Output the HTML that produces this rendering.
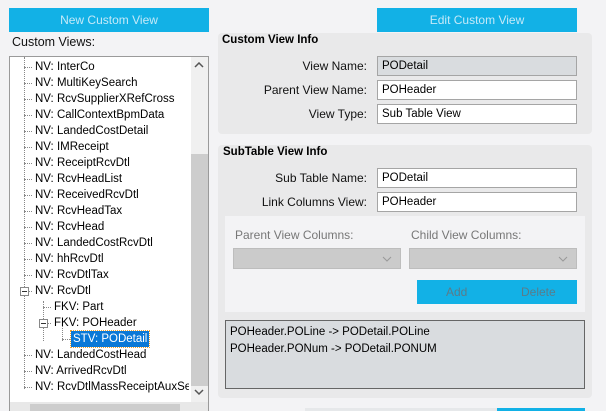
<!DOCTYPE html>
<html><head><style>
*{margin:0;padding:0;box-sizing:border-box}
body{width:606px;height:411px;overflow:hidden;background:#f3f3f5;font-family:"Liberation Sans",sans-serif;font-size:12px;color:#000;position:relative}
.a{position:absolute}
.btn{background:#12b1e6;color:#c4e9f8;text-align:center;line-height:24px;font-size:12px}
.grp{background:#e9e9ea;border-radius:4px}
.t{font-weight:bold;font-size:11.5px}
.lbl{text-align:right;width:150px;left:217px;font-size:12px;color:#111}
.in{left:377px;width:200px;height:20px;border:1px solid #a5a5a5;background:#fff;padding-left:4px;line-height:18px;font-size:11.5px}
.row{position:absolute;height:16px;line-height:16px;white-space:nowrap;font-size:11.5px;letter-spacing:0}
.h{position:absolute;border-top:1px dotted #888;width:8px}
</style></head><body>
<div class="a btn" style="left:9px;top:8px;width:200px;height:24px">New Custom View</div>
<div class="a" style="left:12px;top:35px;font-size:12.5px;color:#111">Custom Views:</div>
<div class="a" style="left:9px;top:56px;width:200px;height:355px;border:1px solid #9a9a9a;border-bottom:none;background:#fff;overflow:hidden">
 <div class="a" style="left:181px;top:0;width:17px;height:345px;background:#f0f0f0"></div>
 <div class="a" style="left:181px;top:97px;width:17px;height:232px;background:#cdcdcd"></div>
 <svg class="a" style="left:184px;top:5px" width="10" height="7"><path d="M1 5 L5 1 L9 5" fill="none" stroke="#555" stroke-width="1.5"/></svg>
 <svg class="a" style="left:184px;top:332px" width="10" height="7"><path d="M1 1 L5 5 L9 1" fill="none" stroke="#555" stroke-width="1.5"/></svg>
 <div class="a" style="left:0;top:345px;width:199px;height:12px;background:#e8e8e8"></div>
 <div class="a" style="left:20px;top:347px;width:150px;height:10px;background:#cdcdcd"></div>
 <div class="a" style="left:14px;top:0;height:332px;border-left:1px dotted #888"></div>
 <div class="a" style="left:33px;top:244px;height:40px;border-left:1px dotted #888"></div>
 <div class="a" style="left:52px;top:268px;height:16px;border-left:1px dotted #888"></div>
</div>
<div id="tree"></div>
<script>
var items=[["NV: InterCo",0],["NV: MultiKeySearch",0],["NV: RcvSupplierXRefCross",0],["NV: CallContextBpmData",0],["NV: LandedCostDetail",0],["NV: IMReceipt",0],["NV: ReceiptRcvDtl",0],["NV: RcvHeadList",0],["NV: ReceivedRcvDtl",0],["NV: RcvHeadTax",0],["NV: RcvHead",0],["NV: LandedCostRcvDtl",0],["NV: hhRcvDtl",0],["NV: RcvDtlTax",0],["NV: RcvDtl",0,1],["FKV: Part",1],["FKV: POHeader",1,1],["STV: PODetail",2],["NV: LandedCostHead",0],["NV: ArrivedRcvDtl",0],["NV: RcvDtlMassReceiptAuxSele",0]];
var h="";
items.forEach(function(it,i){var y=59+i*16,x=35+it[1]*19;
var lx=24+it[1]*19;
h+='<div class="h" style="left:'+lx+'px;top:'+(y+8)+'px"></div>';
if(it[2])h+='<div class="a" style="left:'+(lx-4)+'px;top:'+(y+4)+'px;width:9px;height:9px;border:1px solid #888;background:#fff"><div class="a" style="left:1px;top:3px;width:5px;border-top:1px solid #333"></div></div>';
if(it[1]==2)h+='<div class="row" style="left:'+(x-2)+'px;top:'+y+'px;background:#0a78d7;color:#fff;padding:0 2px;outline:1px dotted #f0a030;max-width:200px">'+it[0]+'</div>';
else h+='<div class="row" style="left:'+x+'px;top:'+y+'px;width:'+(189-x)+'px;overflow:hidden">'+it[0]+'</div>';});
document.getElementById("tree").innerHTML=h;
</script>
<div class="a btn" style="left:377px;top:8px;width:200px;height:24px">Edit Custom View</div>
<div class="a grp" style="left:218px;top:33px;width:374px;height:101px"></div>
<div class="a t" style="left:222px;top:34px">Custom View Info</div>
<div class="a lbl" style="top:59px">View Name:</div>
<div class="a lbl" style="top:83px">Parent View Name:</div>
<div class="a lbl" style="top:107px">View Type:</div>
<div class="a in" style="top:56px;background:#d9dcdf">PODetail</div>
<div class="a in" style="top:80px">POHeader</div>
<div class="a in" style="top:104px">Sub Table View</div>
<div class="a grp" style="left:218px;top:145px;width:374px;height:253px"></div>
<div class="a t" style="left:223px;top:146px">SubTable View Info</div>
<div class="a lbl" style="top:171px">Sub Table Name:</div>
<div class="a lbl" style="top:195px">Link Columns View:</div>
<div class="a in" style="top:168px">PODetail</div>
<div class="a in" style="top:192px">POHeader</div>
<div class="a" style="left:225px;top:216px;width:360px;height:96px;background:#f3f3f5"></div>
<div class="a" style="left:235px;top:228px;color:#777">Parent View Columns:</div>
<div class="a" style="left:411px;top:228px;color:#777">Child View Columns:</div>
<div class="a" style="left:233px;top:248px;width:168px;height:21px;background:#cbcbcb;border:1px solid #bdbdbd"><svg class="a" style="left:148px;top:7px" width="10" height="6"><path d="M1 1 L5 5 L9 1" fill="none" stroke="#999" stroke-width="1"/></svg></div>
<div class="a" style="left:409px;top:248px;width:168px;height:21px;background:#cbcbcb;border:1px solid #bdbdbd"><svg class="a" style="left:148px;top:7px" width="10" height="6"><path d="M1 1 L5 5 L9 1" fill="none" stroke="#999" stroke-width="1"/></svg></div>
<div class="a" style="left:417px;top:280px;width:160px;height:24px;background:#12b1e6;color:#5a7c8a;line-height:24px">
 <span class="a" style="left:29px">Add</span><span class="a" style="left:104px">Delete</span></div>
<div class="a" style="left:225px;top:320px;width:360px;height:69px;background:#d9dcdf;border:1px solid #666;padding:3px 4px;line-height:17px;font-size:11.5px">POHeader.POLine -&gt; PODetail.POLine<br>POHeader.PONum -&gt; PODetail.PONUM</div>
<div class="a" style="left:305px;top:408px;width:192px;height:3px;background:#e6e8ea"></div>
<div class="a" style="left:497px;top:408px;width:88px;height:3px;background:#12b1e6"></div>
</body></html>
